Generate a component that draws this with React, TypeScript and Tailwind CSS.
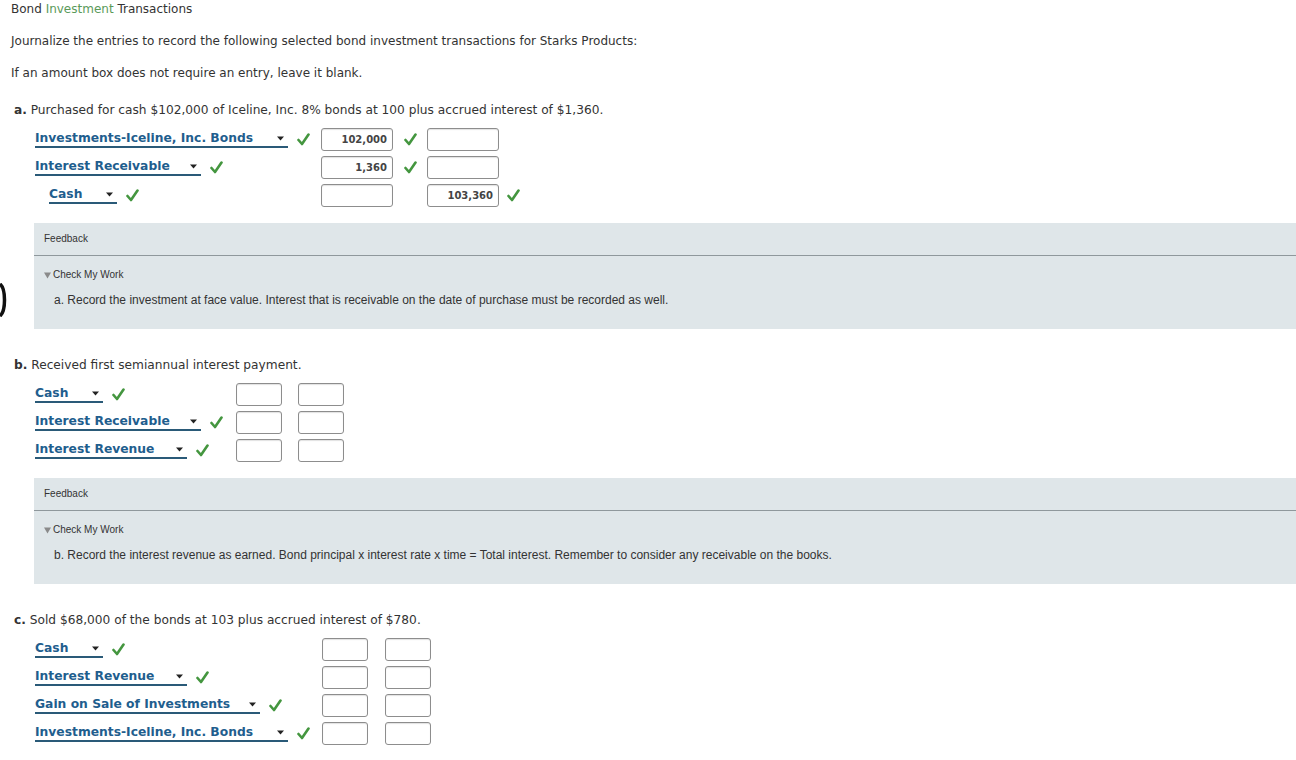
import React from "react";

const verdana = { fontFamily: '"DejaVu Sans", Verdana, sans-serif' };
const arial = { fontFamily: '"Liberation Sans", Arial, sans-serif' };

function Check() {
  return (
    <svg width="13" height="13" viewBox="0 0 13 13" className="shrink-0">
      <polyline
        points="1.5,7 5,11 11.5,1.5"
        fill="none"
        stroke="#44963f"
        strokeWidth="2.6"
        strokeLinecap="round"
        strokeLinejoin="round"
      />
    </svg>
  );
}

function Dropdown({ label, width }: { label: string; width: number }) {
  return (
    <div
      className="flex h-[17px] items-center border-b-2 border-[#2a5a78] bg-white pr-[4px] text-[12.3px] font-bold leading-[15px] text-[#1f5e8e]"
      style={{ ...verdana, width }}
    >
      <span className="whitespace-nowrap">{label}</span>
      <span className="flex-1" />
      <svg width="7" height="5" viewBox="0 0 7 5" className="shrink-0">
        <polygon points="0,0.5 7,0.5 3.5,4.5" fill="#222" />
      </svg>
    </div>
  );
}

function Box({ value, width }: { value?: string; width: number }) {
  return (
    <div
      className="flex h-[23px] items-center justify-end rounded-[3px] border border-[#8d8d8d] bg-white pr-[5px] text-[10px] font-bold text-[#444] shadow-[inset_0_1px_1px_rgba(0,0,0,0.12)]"
      style={{ ...verdana, width }}
    >
      {value}
    </div>
  );
}

type Row = {
  label: string;
  width: number;
  indent?: boolean;
  debit?: string;
  credit?: string;
  debitCheck?: boolean;
  creditCheck?: boolean;
};

function Entry({
  rows,
  col1,
  boxW,
  gap,
}: {
  rows: Row[];
  col1: number;
  boxW: number;
  gap: number;
}) {
  return (
    <div className="mt-[7px] flex flex-col">
      {rows.map((r) => (
        <div key={r.label} className="flex h-[28px] items-center pl-[35px]">
          <div
            className={`flex items-center gap-[9px] ${r.indent ? "pl-[14px]" : ""}`}
            style={{ width: col1 }}
          >
            <Dropdown label={r.label} width={r.width} />
            <Check />
          </div>
          <Box value={r.debit} width={boxW} />
          <div className="flex items-center justify-center" style={{ width: gap }}>
            {r.debitCheck && <Check />}
          </div>
          <Box value={r.credit} width={boxW} />
          {r.creditCheck && (
            <div className="pl-[8px]">
              <Check />
            </div>
          )}
        </div>
      ))}
    </div>
  );
}

function Feedback({ text }: { text: string }) {
  return (
    <div className="ml-[34px] mt-[14px] h-[106px] bg-[#dfe6e9]" style={arial}>
      <div className="pl-[10px] pt-[10px] text-[10px] leading-[12px] text-[#333]">Feedback</div>
      <div className="mt-[10px] h-[1px] bg-[#8f989c]" />
      <div className="mt-[13px] flex items-center pl-[10px] text-[10px] leading-[12px] text-[#333]">
        <svg width="7" height="7" viewBox="0 0 7 7" className="mr-[2px]">
          <polygon points="0,0.5 7,0.5 3.5,6.5" fill="#8a8a8a" />
        </svg>
        Check My Work
      </div>
      <div className="mt-[12px] pl-[20px] text-[12px] leading-[14px] text-[#333]">{text}</div>
    </div>
  );
}

function Heading({ letter, text }: { letter: string; text: string }) {
  return (
    <div className="mt-[28px] h-[16px] pl-[14px] text-[12.2px] leading-[16px] text-[#333]" style={verdana}>
      <span className="font-bold">{letter}</span> {text}
    </div>
  );
}

export default function App() {
  return (
    <div className="relative h-[760px] w-[1296px] overflow-hidden bg-white pt-[1px] text-[#333]" style={verdana}>
      <svg width="8" height="34" viewBox="0 0 8 34" className="absolute left-0 top-[283px]">
        <path d="M0,1 C6,6 6,28 0,33" fill="none" stroke="#111" strokeWidth="3.5" />
      </svg>

      <div className="h-[16px] pl-[11px] text-[12px] leading-[16px]">
        Bond <span className="text-[#5a9a5a]">Investment</span> Transactions
      </div>
      <div className="mt-[16px] h-[16px] pl-[11px] text-[12px] leading-[16px]">
        Journalize the entries to record the following selected bond investment transactions for Starks Products:
      </div>
      <div className="mt-[16px] h-[16px] pl-[11px] text-[12px] leading-[16px]">
        If an amount box does not require an entry, leave it blank.
      </div>

      <div className="mt-[21px] h-[16px] pl-[14px] text-[12.2px] leading-[16px]">
        <span className="font-bold">a.</span> Purchased for cash $102,000 of Iceline, Inc. 8% bonds at 100 plus accrued interest of $1,360.
      </div>
      <Entry
        col1={286}
        boxW={72}
        gap={34}
        rows={[
          { label: "Investments-Iceline, Inc. Bonds", width: 253, debit: "102,000", debitCheck: true },
          { label: "Interest Receivable", width: 166, debit: "1,360", debitCheck: true },
          { label: "Cash", width: 68, indent: true, credit: "103,360", creditCheck: true },
        ]}
      />
      <Feedback text="a. Record the investment at face value. Interest that is receivable on the date of purchase must be recorded as well." />

      <Heading letter="b." text="Received first semiannual interest payment." />
      <Entry
        col1={201}
        boxW={46}
        gap={16}
        rows={[
          { label: "Cash", width: 68 },
          { label: "Interest Receivable", width: 166 },
          { label: "Interest Revenue", width: 152 },
        ]}
      />
      <Feedback text="b. Record the interest revenue as earned. Bond principal x interest rate x time = Total interest. Remember to consider any receivable on the books." />

      <Heading letter="c." text="Sold $68,000 of the bonds at 103 plus accrued interest of $780." />
      <Entry
        col1={287}
        boxW={46}
        gap={17}
        rows={[
          { label: "Cash", width: 68 },
          { label: "Interest Revenue", width: 152 },
          { label: "Gain on Sale of Investments", width: 225 },
          { label: "Investments-Iceline, Inc. Bonds", width: 253 },
        ]}
      />
    </div>
  );
}
